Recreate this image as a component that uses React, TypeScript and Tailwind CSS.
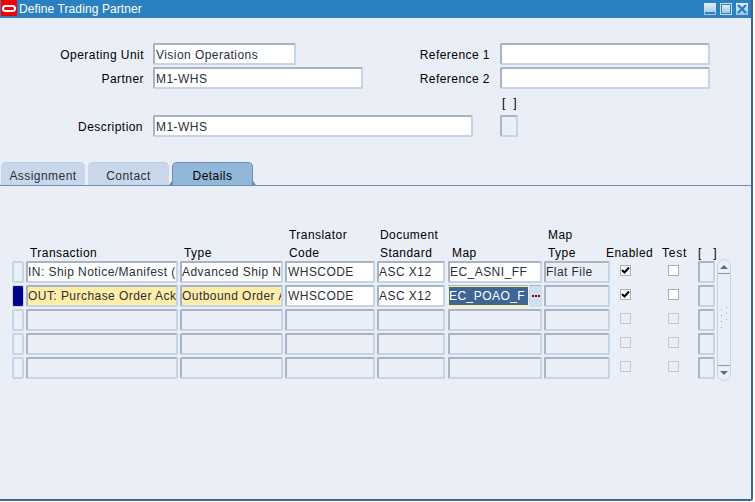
import { ReactNode } from "react";

function Field({ value, width, tone = "white", pad = "pl-[1px]", lead = "leading-[18px]" }: { value?: string; width: string; tone?: "white" | "yellow" | "empty"; pad?: string; lead?: string }) {
    const tones = {
        white: "bg-white",
        yellow: "bg-[#ffeda8]",
        empty: "bg-[#e9eef7]",
    };
    return (
        <div className={`${width} ${tones[tone]} ${pad} ${lead} h-[22px] shrink-0 overflow-hidden whitespace-nowrap rounded-[2px] border-2 border-t-[#a9b3c2] border-l-[#a9b3c2] border-r-[#c5d5e8] border-b-[#c5d5e8] text-[#2a2f38]`}>
            {value}
        </div>
    );
}

function Label({ children, className = "" }: { children: ReactNode; className?: string }) {
    return <div className={`shrink-0 whitespace-nowrap text-black ${className}`}>{children}</div>;
}

function Check({ on, off, className }: { on?: boolean; off?: boolean; className: string }) {
    return (
        <div className={`h-[22px] shrink-0 pt-[4px] ${className}`}>
            <div className={`flex h-[11px] w-[11px] items-center justify-center border ${off ? "border-[#c4c8cf] bg-[#e9eef7]" : "border-[#a9adb5] bg-white"}`}>
                {on && (
                    <svg width="9" height="9" viewBox="0 0 9 9">
                        <path d="M1 4 L3.5 6.5 L8 1.5" fill="none" stroke="#000" strokeWidth="2" />
                    </svg>
                )}
            </div>
        </div>
    );
}

function Row({ cells, selected, map, on, off }: { cells: string[]; selected?: boolean; map?: ReactNode; on?: boolean; off?: boolean }) {
    const tone = (v: string) => (v ? "white" : "empty") as "white" | "empty";
    return (
        <div className="flex h-[22px] items-start">
            <div className={`h-[22px] w-[12px] shrink-0 rounded-[2px] ${selected ? "border border-[#c5d5e8] bg-[#00008b]" : "border-2 border-[#c5d5e8] bg-[#e9eef7]"}`} />
            <Field width="w-[152px] ml-[2px]" value={cells[0]} tone={selected ? "yellow" : tone(cells[0])} pad="pl-[0px]" />
            <Field width="w-[103px] ml-[2px]" value={cells[1]} tone={selected ? "yellow" : tone(cells[1])} pad="pl-[0px]" />
            <Field width="w-[90px] ml-[2px]" value={cells[2]} tone={tone(cells[2])} />
            <Field width="w-[68px] ml-[2px]" value={cells[3]} tone={tone(cells[3])} pad="pl-[0px]" />
            {map ?? <Field width="w-[94px] ml-[3px]" value={cells[4]} tone={tone(cells[4])} pad="pl-[0px]" />}
            <Field width="w-[66px] ml-[2px]" value={cells[5]} tone="empty" pad="pl-[0px]" />
            <Check on={on} off={off} className="ml-[10px]" />
            <Check off={off} className="ml-[37px]" />
            <Field width="w-[17px] ml-[19px]" tone="empty" />
        </div>
    );
}

export default function App() {
    return (
        <div className="flex h-[502px] w-[755px] flex-col overflow-hidden bg-white font-['Liberation_Sans',sans-serif] text-[12px] tracking-[0.45px]">
            <div className="flex h-[501px] w-[753px] flex-col rounded-br-[3px] border-r-2 border-b-2 border-[#3f6594] bg-[#e9eef7]">
                <div className="flex h-[18px] shrink-0 items-center bg-[#2b80c0] pr-[3px]">
                    <div className="ml-[1px] flex h-[16px] w-[16px] items-center justify-center self-start bg-[#f40000]">
                        <div className="h-[7px] w-[14px] rounded-[4px] border-2 border-white" />
                    </div>
                    <span className="ml-[2px] tracking-[0.1px] text-white">Define Trading Partner</span>
                    <div className="ml-auto flex gap-[4px]">
                        <div className="flex h-[12px] w-[12px] items-end justify-center bg-gradient-to-b from-[#e4eef8] to-[#9cc4e4] pb-[1px]">
                            <div className="h-[2px] w-[10px] bg-[#2b80c0]" />
                        </div>
                        <div className="h-[12px] w-[12px] border-2 border-[#2b80c0] bg-gradient-to-b from-[#e4eef8] to-[#9cc4e4] outline outline-1 outline-[#cfe0f0] outline-offset-[-1px]" />
                        <div className="flex h-[12px] w-[12px] items-center justify-center bg-gradient-to-b from-[#e4eef8] to-[#9cc4e4]">
                            <svg width="10" height="10" viewBox="0 0 10 10">
                                <path d="M1 1 L9 9 M9 1 L1 9" stroke="#2b80c0" strokeWidth="2.4" />
                            </svg>
                        </div>
                    </div>
                </div>

                <div className="mt-[25px] flex flex-col">
                    <div className="flex h-[22px] items-center">
                        <Label className="mt-[2px] w-[144px] text-right">Operating Unit</Label>
                        <Field width="w-[143px] ml-[9px]" value="Vision Operations" lead="leading-[20px]" />
                        <Label className="mt-[2px] w-[194px] text-right">Reference 1</Label>
                        <Field width="w-[210px] ml-[10px]" />
                    </div>
                    <div className="mt-[2px] flex h-[22px] items-center">
                        <Label className="mt-[2px] w-[144px] text-right">Partner</Label>
                        <Field width="w-[210px] ml-[9px]" value="M1-WHS" lead="leading-[20px]" />
                        <Label className="mt-[2px] w-[127px] text-right">Reference 2</Label>
                        <Field width="w-[210px] ml-[10px]" />
                    </div>
                    <div className="mt-[6px] h-[20px] pl-[502px] leading-[16px] text-black">[&nbsp;&nbsp;]</div>
                    <div className="flex h-[22px] items-center">
                        <Label className="mt-[2px] w-[143px] text-right">Description</Label>
                        <Field width="w-[320px] ml-[10px]" value="M1-WHS" lead="leading-[20px]" />
                        <Field width="w-[18px] ml-[27px]" tone="empty" />
                    </div>
                </div>

                <div className="relative mt-[25px] flex h-[24px] items-end border-b border-[#6f8ead] pl-[1px]">
                    <div className="flex h-[23px] w-[84px] items-center justify-center rounded-t-[5px] border-t border-[#bccde2] bg-[#c9d7ea] pt-[3px] text-[#2a2f38]">Assignment</div>
                    <div className="ml-[3px] flex h-[23px] w-[81px] items-center justify-center rounded-t-[5px] border-t border-[#bccde2] bg-[#c9d7ea] pt-[3px] text-[#2a2f38]">Contact</div>
                    <div className="relative ml-[3px] flex h-[23px] w-[81px] items-center justify-center rounded-t-[5px] border border-b-0 border-[#6f8ead] bg-[#91b7d9] pt-[3px] text-black">
                        Details
                        <div className="absolute bottom-0 left-[-4px] h-0 w-0 border-b-[4px] border-l-[3px] border-b-[#6f8ead] border-l-transparent" />
                        <div className="absolute bottom-0 right-[-4px] h-0 w-0 border-b-[4px] border-r-[3px] border-b-[#6f8ead] border-r-transparent" />
                    </div>
                </div>

                <div className="mt-[40px] flex h-[35px] pl-[30px] leading-[18px] text-black">
                    <div className="mt-[18px] w-[154px]">Transaction</div>
                    <div className="mt-[18px] w-[105px]">Type</div>
                    <div className="w-[91px]">Translator<br />Code</div>
                    <div className="w-[72px]">Document<br />Standard</div>
                    <div className="mt-[18px] w-[96px]">Map</div>
                    <div className="w-[58px]">Map<br />Type</div>
                    <div className="mt-[18px] w-[56px]">Enabled</div>
                    <div className="mt-[18px] w-[36px] tracking-[0.8px]">Test</div>
                    <div className="mt-[18px]">[&nbsp;&nbsp;&nbsp;]</div>
                </div>

                <div className="relative flex flex-col gap-[2px] pl-[12px]">
                    <Row cells={["IN: Ship Notice/Manifest (", "Advanced Ship N", "WHSCODE", "ASC X12", "EC_ASNI_FF", "Flat File"]} on />
                    <Row
                        selected
                        on
                        cells={["OUT: Purchase Order Ack", "Outbound Order A", "WHSCODE", "ASC X12", "", ""]}
                        map={
                            <div className="ml-[3px] flex h-[22px] w-[94px] shrink-0">
                                <div className="h-[22px] w-[80px] border-t border-[#a9b3c2] bg-[#ffeda8] pt-[1px] pb-[2px] pl-[1px]">
                                    <div className="h-[18px] overflow-hidden whitespace-nowrap bg-[#3f6594] leading-[18px] text-white">EC_POAO_F</div>
                                </div>
                                <div className="ml-[1px] flex h-[22px] w-[13px] items-start justify-center gap-[1px] rounded-r-[2px] border-t border-[#a9b3c2] bg-[#cfe0f0] pt-[9px]">
                                    <i className="h-[2px] w-[2px] bg-[#800000]" />
                                    <i className="h-[2px] w-[2px] bg-[#800000]" />
                                    <i className="h-[2px] w-[2px] bg-[#800000]" />
                                </div>
                            </div>
                        }
                    />
                    <Row cells={["", "", "", "", "", ""]} off />
                    <Row cells={["", "", "", "", "", ""]} off />
                    <Row cells={["", "", "", "", "", ""]} off />

                    <div className="absolute left-[717px] top-[-2px] flex h-[122px] w-[14px] flex-col items-center justify-between rounded-[7px] border border-[#c5d5e8] bg-[#e9eef7]">
                        <div className="flex h-[14px] w-full items-center justify-center border-b border-[#8a97a8]">
                            <div className="h-0 w-0 border-x-[4px] border-b-[4px] border-x-transparent border-b-[#5a6f8a]" />
                        </div>
                        <svg width="10" height="26" viewBox="0 0 10 26">
                            <path d="M2 3 L3 2 M7 1 L8 0 M2 9 L3 8 M7 7 L8 6 M2 15 L3 14 M7 13 L8 12 M2 21 L3 20" stroke="#9aa8bb" strokeWidth="1" />
                        </svg>
                        <div className="flex h-[15px] w-full items-center justify-center border-t border-[#8a97a8]">
                            <div className="h-0 w-0 border-x-[4px] border-t-[4px] border-x-transparent border-t-[#5a6f8a]" />
                        </div>
                    </div>
                </div>
            </div>
        </div>
    );
}
